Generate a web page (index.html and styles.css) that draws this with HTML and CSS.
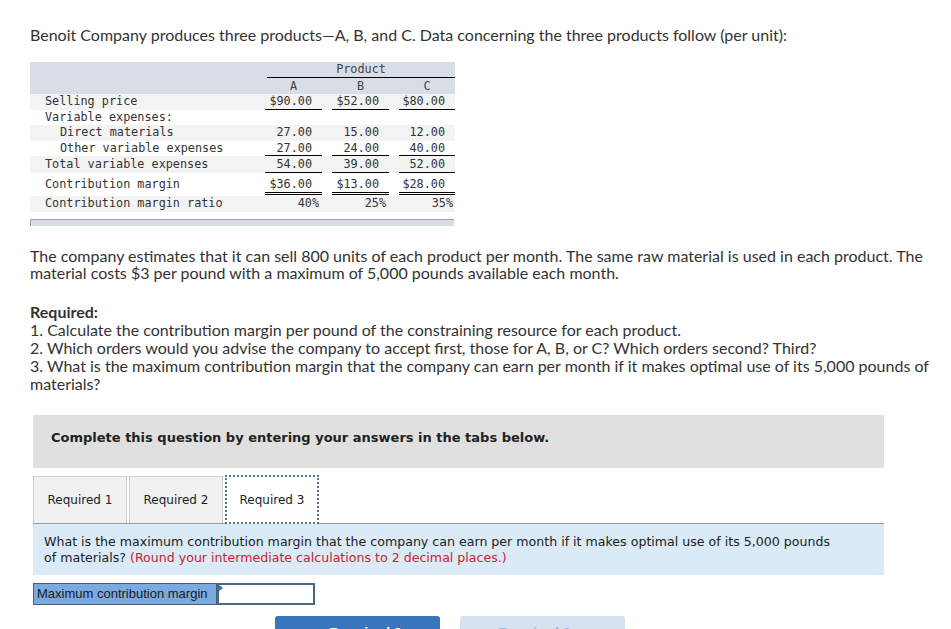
FILE: index.html
```html
<!DOCTYPE html>
<html>
<head>
<meta charset="utf-8">
<link rel="stylesheet" href="styles.css">
</head>
<body>
<div class="page">
  <p class="intro">Benoit Company produces three products—A, B, and C. Data concerning the three products follow (per unit):</p>

  <div class="fin">
    <div class="head">
      <div class="row hrow">
        <div></div>
        <div class="product">Product</div>
      </div>
      <div class="row hrow">
        <div></div>
        <div class="c">A</div>
        <div class="c">B</div>
        <div class="c">C</div>
      </div>
    </div>
    <div class="row shade">
      <div class="lbl">Selling price</div>
      <div class="v ul">$90.00</div>
      <div class="v ul">$52.00</div>
      <div class="v ul">$80.00</div>
    </div>
    <div class="row">
      <div class="lbl">Variable expenses:</div>
      <div></div><div></div><div></div>
    </div>
    <div class="row shade">
      <div class="lbl ind">Direct materials</div>
      <div class="v">27.00</div>
      <div class="v">15.00</div>
      <div class="v">12.00</div>
    </div>
    <div class="row">
      <div class="lbl ind">Other variable expenses</div>
      <div class="v ul">27.00</div>
      <div class="v ul">24.00</div>
      <div class="v ul">40.00</div>
    </div>
    <div class="row shade tall1">
      <div class="lbl">Total variable expenses</div>
      <div class="v ul">54.00</div>
      <div class="v ul">39.00</div>
      <div class="v ul">52.00</div>
    </div>
    <div class="row tall2">
      <div class="lbl">Contribution margin</div>
      <div class="v dul">$36.00</div>
      <div class="v dul">$13.00</div>
      <div class="v dul">$28.00</div>
    </div>
    <div class="row shade ratio">
      <div class="lbl">Contribution margin ratio</div>
      <div class="v pct">40%</div>
      <div class="v pct">25%</div>
      <div class="v pct">35%</div>
    </div>
  </div>
  <div class="scrollbar"></div>

  <p class="para">The company estimates that it can sell 800 units of each product per month. The same raw material is used in each product. The material costs $3 per pound with a maximum of 5,000 pounds available each month.</p>

  <div class="req">
    <div class="req-title">Required:</div>
    <div>1. Calculate the contribution margin per pound of the constraining resource for each product.</div>
    <div>2. Which orders would you advise the company to accept first, those for A, B, or C? Which orders second? Third?</div>
    <div>3. What is the maximum contribution margin that the company can earn per month if it makes optimal use of its 5,000 pounds of materials?</div>
  </div>

  <div class="question">
    <div class="banner">Complete this question by entering your answers in the tabs below.</div>
    <div class="tabs">
      <div class="tab">Required 1</div>
      <div class="tab">Required 2</div>
      <div class="tab active">Required 3</div>
    </div>
    <div class="prompt">What is the maximum contribution margin that the company can earn per month if it makes optimal use of its 5,000 pounds of materials? <span class="red">(Round your intermediate calculations to 2 decimal places.)</span></div>
    <div class="answer">
      <div class="alabel">Maximum contribution margin</div>
      <div class="ainput"><span class="marker"></span></div>
    </div>
    <div class="nav">
      <div class="btn prev">&lt;&nbsp;&nbsp;Required 2</div>
      <div class="btn next">Required 3&nbsp;&nbsp;&gt;</div>
    </div>
  </div>
</div>
</body>
</html>
```

FILE: styles.css
```css
html, body {
  margin: 0;
  padding: 0;
  background: #fff;
}
.page {
  padding-left: 30px;
  font-family: "Lato", "Open Sans", sans-serif;
  color: #333;
}
.intro {
  margin: 26px 0 0 0;
  font-size: 16px;
  line-height: 18px;
}
.fin {
  margin-top: 18px;
  width: 425px;
  font-family: "DejaVu Sans Mono", monospace;
  font-size: 11.8px;
  color: #333;
}
.head {
  background: #d9dde7;
}
.row {
  display: grid;
  grid-template-columns: 225px 57px 57px 56px;
  column-gap: 10px;
  height: 15.5px;
  line-height: 15px;
}
.hrow {
  height: 16px;
  line-height: 16px;
  color: #444;
}
.product {
  grid-column: 2 / 5;
  text-align: center;
  border-bottom: 1px solid #000;
  margin-left: 2px;
  line-height: 15px;
}
.c {
  text-align: center;
}
.shade {
  background: #f3f3f3;
}
.lbl {
  padding-left: 15px;
  white-space: nowrap;
}
.ind {
  padding-left: 30px;
}
.v {
  text-align: right;
  padding-right: 10px;
}
.ul {
  border-bottom: 1px solid #000;
  height: 14.5px;
}
.tall1 {
  height: 17px;
  line-height: 16px;
}
.tall1 .ul {
  height: 16px;
}
.tall2 {
  height: 22px;
  line-height: 22px;
  margin-bottom: 1px;
}
.dul {
  border-bottom: 3px double #000;
  height: 19px;
}
.pct {
  padding-right: 3px;
}
.ratio .pct:last-child {
  padding-right: 2px;
}
.scrollbar {
  margin-top: 7px;
  width: 423px;
  height: 6px;
  background: #d8dce6;
  border-top: 1px solid #a0a0a0;
  border-left: 1px solid #a0a0a0;
}
.para {
  margin: 21px 0 0 0;
  font-size: 16px;
  line-height: 17px;
  padding-right: 18px;
}
.req {
  margin-top: 22px;
  font-size: 16px;
  line-height: 18px;
  padding-right: 22px;
}
.req-title {
  font-weight: bold;
}
.question {
  margin-top: 22px;
  margin-left: 3px;
  width: 851px;
  font-family: "DejaVu Sans", sans-serif;
}
.banner {
  background: #e0e0e0;
  height: 53px;
  line-height: 45px;
  padding-left: 18px;
  font-weight: bold;
  font-size: 13px;
  color: #222;
}
.tabs {
  margin-top: 8px;
  display: flex;
  align-items: flex-end;
  border-bottom: 1px solid #9a9a9a;
  height: 47px;
}
.tab {
  box-sizing: border-box;
  width: 94px;
  height: 47px;
  line-height: 47px;
  text-align: center;
  font-size: 12px;
  color: #222;
  background: #f1f1f1;
  border: 1px solid #cfcfcf;
  border-bottom: none;
  margin-right: 2px;
}
.tab.active {
  background: #fff;
  border: 2px dotted #5575a0;
  height: 49px;
  margin-bottom: -1px;
  line-height: 46px;
}
.prompt {
  background: #dbeaf7;
  padding: 10px 40px 9px 11px;
  font-size: 12.6px;
  line-height: 16px;
  color: #222;
}
.red {
  color: #c4262e;
}
.answer {
  margin-top: 8px;
  display: flex;
  height: 22px;
}
.alabel {
  box-sizing: border-box;
  width: 184px;
  height: 22px;
  background: #7aaae0;
  border: 1px solid #4d6070;
  font-family: "Liberation Sans", Arial, sans-serif;
  font-size: 13px;
  line-height: 20px;
  padding-left: 3px;
  color: #1a1a1a;
  white-space: nowrap;
}
.ainput {
  position: relative;
  box-sizing: border-box;
  width: 98px;
  height: 22px;
  background: #fff;
  border: 2px solid #4a6888;
}
.marker {
  position: absolute;
  left: 0;
  top: 0;
  width: 0;
  height: 0;
  border-top: 3px solid transparent;
  border-bottom: 3px solid transparent;
  border-left: 4px solid #2f6fbd;
}
.nav {
  margin-top: 11px;
  display: flex;
  gap: 20px;
  padding-left: 242px;
}
.btn {
  width: 165px;
  height: 34px;
  border-radius: 3px;
  font-family: "Liberation Sans", Arial, sans-serif;
  font-weight: bold;
  font-size: 14px;
  line-height: 34px;
  text-align: center;
}
.prev {
  background: #3a76c0;
  color: #fff;
}
.next {
  background: #d6e2ef;
  color: #9fb4ce;
}
```
